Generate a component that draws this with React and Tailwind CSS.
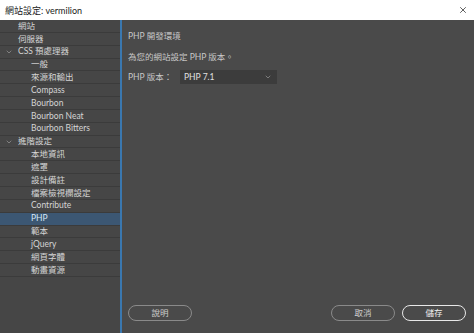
import { ChevronDown, X } from "lucide-react";

const rows = [
  { label: "網站", level: 1 },
  { label: "伺服器", level: 1 },
  { label: "CSS 預處理器", level: 1, open: true },
  { label: "一般", level: 2 },
  { label: "來源和輸出", level: 2 },
  { label: "Compass", level: 2 },
  { label: "Bourbon", level: 2 },
  { label: "Bourbon Neat", level: 2 },
  { label: "Bourbon Bitters", level: 2 },
  { label: "進階設定", level: 1, open: true },
  { label: "本地資訊", level: 2 },
  { label: "遮罩", level: 2 },
  { label: "設計備註", level: 2 },
  { label: "檔案檢視欄設定", level: 2 },
  { label: "Contribute", level: 2 },
  { label: "PHP", level: 2, active: true },
  { label: "範本", level: 2 },
  { label: "jQuery", level: 2 },
  { label: "網頁字體", level: 2 },
  { label: "動畫資源", level: 2 },
];

const font = { fontFamily: 'Lato, "Noto Sans CJK TC", sans-serif' };

const App = () => {
  return (
    <div className="w-[474px] h-[333px] flex flex-col bg-white overflow-hidden" style={font}>
      <div className="h-[20px] flex items-center justify-between pl-[5px] pr-[6px] bg-white">
        <span className="text-[9px] text-[#1a1a1a] leading-none">網站設定: vermilion</span>
        <X size={10} strokeWidth={1.5} className="text-black" />
      </div>
      <div className="flex-1 flex bg-[#464646]">
        <div className="w-[120px] flex flex-col">
          {rows.map((r) => (
            <div
              key={r.label}
              className={
                "h-[12.85px] flex items-center border-b border-[#3b3b3b] text-[8.5px] leading-none " +
                (r.active ? "bg-[#3c5773] text-[#d6e6f5]" : "text-[#d4d4d4]")
              }
            >
              {r.level === 1 ? (
                <div className="flex items-center">
                  <span className="w-[18px] flex justify-center">
                    {r.open ? <ChevronDown size={8} strokeWidth={1.5} className="text-[#bbbbbb]" /> : null}
                  </span>
                  <span>{r.label}</span>
                </div>
              ) : (
                <span className="pl-[31px]">{r.label}</span>
              )}
            </div>
          ))}
        </div>
        <div className="w-[2px] bg-[#3a78b0]"></div>
        <div className="flex-1 flex flex-col bg-[#4a4a4a] pl-[6px] pr-[8px] text-[8.5px] text-[#c8c8c8]">
          <div className="mt-[12px] leading-none">PHP 開發環境</div>
          <div className="mt-[12px] leading-none">為您的網站設定 PHP 版本。</div>
          <div className="mt-[9px] flex items-center">
            <span className="w-[52px] leading-none">PHP 版本：</span>
            <div className="w-[97px] h-[14px] bg-[#3c3c3c] flex items-center justify-between pl-[4px] pr-[5px]">
              <span className="text-[#e0e0e0] leading-none">PHP 7.1</span>
              <ChevronDown size={8} strokeWidth={1.5} className="text-[#bbbbbb]" />
            </div>
          </div>
          <div className="flex-1"></div>
          <div className="flex items-center justify-between mb-[12px]">
            <button className="w-[64px] h-[16px] rounded-full border border-[#8a8a8a] text-[8.5px] text-[#cfcfcf] leading-none">說明</button>
            <div className="flex gap-[7px]">
              <button className="w-[64px] h-[16px] rounded-full border border-[#8a8a8a] text-[8.5px] text-[#cfcfcf] leading-none">取消</button>
              <button className="w-[64px] h-[16px] rounded-full border-[1.5px] border-[#e8e8e8] text-[8.5px] text-[#f0f0f0] leading-none">儲存</button>
            </div>
          </div>
        </div>
      </div>
    </div>
  );
};

export default App;
